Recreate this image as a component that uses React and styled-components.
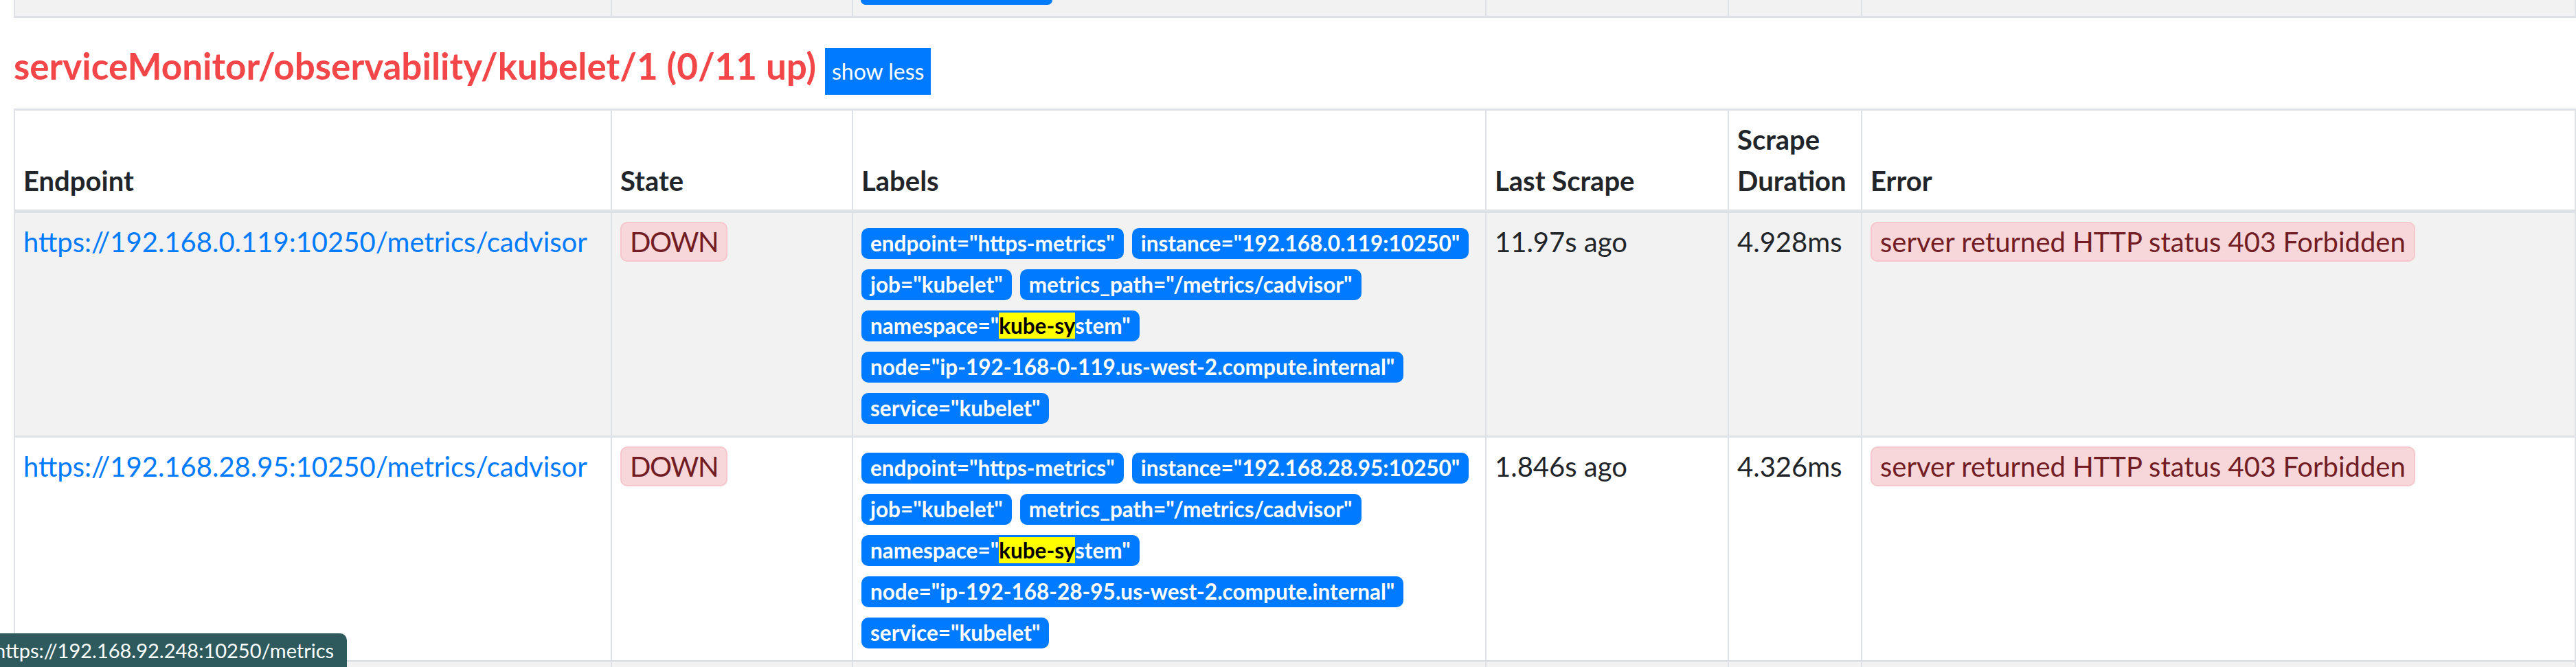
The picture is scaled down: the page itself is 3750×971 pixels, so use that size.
import React from "react";
import styled, { createGlobalStyle } from "styled-components";

const GlobalStyle = createGlobalStyle`
  html, body {
    margin: 0;
    padding: 0;
    background: #fff;
  }
  body {
    font-family: Lato, "Open Sans", "Segoe UI", sans-serif;
    font-size: 40px;
    line-height: 1.5;
    color: #212529;
  }
`;

const Page = styled.div`
  position: relative;
  height: 971px;
  overflow: hidden;
  padding-left: 20px;
`;

const Table = styled.table`
  width: 3728px;
  table-layout: fixed;
  border-collapse: collapse;
  border-left: 2px solid #dee2e6;
  border-right: 2px solid #dee2e6;
`;

const Col = styled.col`
  width: ${(p) => p.$w}px;
`;

const HeadCell = styled.th`
  padding: 12px;
  text-align: left;
  vertical-align: bottom;
  font-weight: 700;
  border-top: 3px solid #dee2e6;
  border-bottom: 5px solid #dee2e6;
  border-left: 2px solid #dee2e6;
`;

const Row = styled.tr`
  background: ${(p) => (p.$striped ? "#f2f2f2" : "#fff")};
`;

const Cell = styled.td`
  height: 24px;
  padding: 12px;
  vertical-align: top;
  border-top: 3px solid #dee2e6;
  border-left: 2px solid #dee2e6;
`;

const StubCell = styled.td`
  height: 23px;
  padding: 0 0 0 11px;
  vertical-align: top;
  border-left: 2px solid #dee2e6;
  border-bottom: 3px solid #dee2e6;
`;

const BadgeTail = styled.div`
  width: 279px;
  height: 7px;
  background: #007bff;
  border-radius: 0 0 10px 10px;
`;

const TitleRow = styled.div`
  display: flex;
  align-items: baseline;
  gap: 13px;
  margin: 38px 0 20px;
`;

const Title = styled.h5`
  margin: 0;
  font-size: 53px;
  font-weight: 700;
  line-height: 1.2;
  color: #f34648;
`;

const ToggleButton = styled.button`
  font-family: inherit;
  font-size: 32px;
  line-height: 48px;
  padding: 10px 10px;
  border: 0;
  border-radius: 0;
  background: #007bff;
  color: #fff;
  cursor: pointer;
`;

const EndpointLink = styled.a`
  color: #007bff;
  text-decoration: none;
  white-space: nowrap;
`;

const AlertBadge = styled.span`
  display: inline-block;
  padding: 7px 12px;
  line-height: 1;
  font-size: 40px;
  color: #721c24;
  background: #f8d7da;
  border: 2px solid #f5c6cb;
  border-radius: 10px;
  white-space: nowrap;
`;

const StateBadge = styled(AlertBadge)`
  letter-spacing: -1.5px;
`;

const LabelList = styled.div`
  display: flex;
  flex-wrap: wrap;
  gap: 15px 12px;
  padding: 10px 0 5px;
`;

const LabelBadge = styled.span`
  display: inline-block;
  height: 45px;
  line-height: 45px;
  padding: 0 13px;
  font-size: 31.5px;
  font-weight: 700;
  color: #fff;
  background: #007bff;
  border-radius: 10px;
  white-space: nowrap;
`;

const Mark = styled.span`
  background: #ffff00;
  color: #000;
`;

const StatusBubble = styled.div`
  position: absolute;
  left: 0;
  bottom: 0;
  height: 49px;
  line-height: 49px;
  padding-right: 19px;
  font-size: 29px;
  color: #fff;
  background: #2e5a5e;
  border-top-right-radius: 10px;
  white-space: nowrap;
  overflow: hidden;
  text-indent: -8px;
`;

const widths = [869, 351, 922, 353, 194, 1039];

const targets = [
  {
    ip: "192.168.0.119",
    node: "ip-192-168-0-119.us-west-2.compute.internal",
    last: "11.97s ago",
    duration: "4.928ms",
  },
  {
    ip: "192.168.28.95",
    node: "ip-192-168-28-95.us-west-2.compute.internal",
    last: "1.846s ago",
    duration: "4.326ms",
  },
];

const Cols = () => (
  <colgroup>
    {widths.map((w, i) => (
      <Col key={i} $w={w} />
    ))}
  </colgroup>
);

const Labels = ({ t }) => (
  <LabelList>
    <LabelBadge>endpoint="https-metrics"</LabelBadge>
    <LabelBadge>instance="{t.ip}:10250"</LabelBadge>
    <LabelBadge>job="kubelet"</LabelBadge>
    <LabelBadge>metrics_path="/metrics/cadvisor"</LabelBadge>
    <LabelBadge>
      namespace="<Mark>kube-sy</Mark>stem"
    </LabelBadge>
    <LabelBadge>node="{t.node}"</LabelBadge>
    <LabelBadge>service="kubelet"</LabelBadge>
  </LabelList>
);

export default function App() {
  return (
    <>
      <GlobalStyle />
      <Page>
        <Table>
          <Cols />
          <tbody>
            <Row $striped>
              <StubCell />
              <StubCell />
              <StubCell>
                <BadgeTail />
              </StubCell>
              <StubCell />
              <StubCell />
              <StubCell />
            </Row>
          </tbody>
        </Table>

        <TitleRow>
          <Title>serviceMonitor/observability/kubelet/1 (0/11 up)</Title>
          <ToggleButton>show less</ToggleButton>
        </TitleRow>

        <Table>
          <Cols />
          <thead>
            <tr>
              <HeadCell>Endpoint</HeadCell>
              <HeadCell>State</HeadCell>
              <HeadCell>Labels</HeadCell>
              <HeadCell>Last Scrape</HeadCell>
              <HeadCell>Scrape Duration</HeadCell>
              <HeadCell>Error</HeadCell>
            </tr>
          </thead>
          <tbody>
            {targets.map((t, i) => (
              <Row key={t.ip} $striped={i % 2 === 0}>
                <Cell>
                  <EndpointLink href="#">
                    https://{t.ip}:10250/metrics/cadvisor
                  </EndpointLink>
                </Cell>
                <Cell>
                  <StateBadge>DOWN</StateBadge>
                </Cell>
                <Cell>
                  <Labels t={t} />
                </Cell>
                <Cell>{t.last}</Cell>
                <Cell>{t.duration}</Cell>
                <Cell>
                  <AlertBadge>server returned HTTP status 403 Forbidden</AlertBadge>
                </Cell>
              </Row>
            ))}
            <Row $striped>
              <Cell />
              <Cell />
              <Cell />
              <Cell />
              <Cell />
              <Cell />
            </Row>
          </tbody>
        </Table>

        <StatusBubble>https://192.168.92.248:10250/metrics</StatusBubble>
      </Page>
    </>
  );
}
